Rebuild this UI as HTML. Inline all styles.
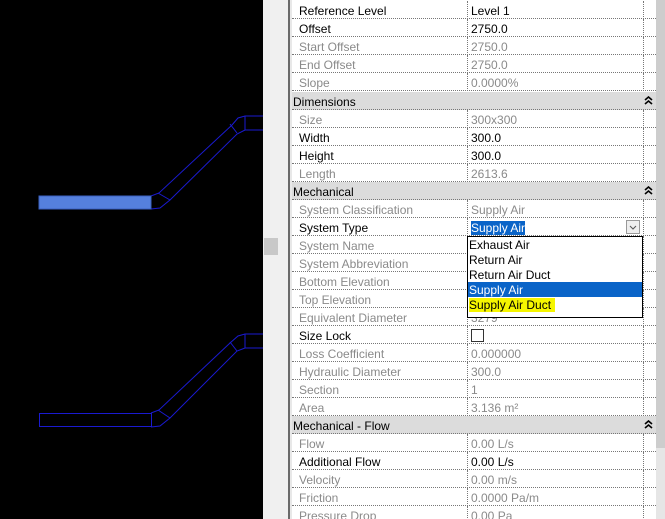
<!DOCTYPE html>
<html><head><style>
*{margin:0;padding:0;box-sizing:border-box}
html,body{width:665px;height:519px;overflow:hidden}
body{background:#000;position:relative;font-family:"Liberation Sans",sans-serif;font-size:12px}
#strip{position:absolute;left:263px;top:0;width:25px;height:519px;background:#f0f0f0}
#grip{position:absolute;left:264px;top:238px;width:14px;height:17px;background:#c8c8c8}
#bl{position:absolute;left:288px;top:0;width:2px;height:519px;background:#6a6a6a}
#bl2{position:absolute;left:290px;top:0;width:2px;height:519px;background:#e8e8e8}
#panel{position:absolute;left:292px;top:0;width:364px;height:519px;background:#fff}
#sb{position:absolute;left:656px;top:0;width:9px;height:519px;background:#e6e6e6}
#thumb{position:absolute;left:656px;top:0;width:9px;height:448px;background:#cdcdcd}
.r{position:absolute;left:292px;width:364px;height:18px;border-bottom:1px dotted #777}
.r .l{position:absolute;left:7px;top:3px;color:#000}
.r .v{position:absolute;left:175px;top:0;height:18px;padding:3px 0 0 3px;border-left:1px dotted #777;width:177px}
.r .c{position:absolute;left:351px;top:0;height:18px;border-left:1px dotted #777;width:12px}
.g .l,.g .v{color:#8a8a8a}
.h{background:#dcdcdc}
.h .l{left:1px}
.h svg{position:absolute;left:352px;top:4px}
#dd{position:absolute;left:467px;top:236px;width:176px;height:82px;background:#fff;border:1px solid #000}
#dd div{height:15px;line-height:16px;padding-left:1px}
</style></head><body>
<svg width="263" height="519" style="position:absolute;left:0;top:0">
<g fill="none" stroke="#1a1ad0" stroke-width="1">
<path d="M151 196 L159 193 L232 125 L238 118 L245 116 L263 116"/>
<path d="M151 209 L160 208 L170 200 L237 134 L245 130 L263 130"/>
<path d="M158 193 L170 200 M230 124 L237 133 M245 116 L245 130"/>
<rect x="39.5" y="413.5" width="112" height="13"/>
<path d="M151 413 L159 410 L230 343 L238 336 L245 334 L263 334"/>
<path d="M151 427 L160 426 L170 418 L237 351 L245 348 L263 348"/>
<path d="M158 410 L170 418 M230 342 L237 351 M245 334 L245 348"/>
</g>
<rect x="39" y="196" width="112" height="13" fill="#5580dd" stroke="#3a60c0"/>
</svg>
<div id="strip"></div><div id="grip"></div><div id="bl"></div><div id="bl2"></div>
<div id="panel"></div><div id="sb"></div><div id="thumb"></div>

<div class="r" style="top:1px"><span class="l">Reference Level</span><span class="v">Level 1</span><span class="c"></span></div>
<div class="r" style="top:19px"><span class="l">Offset</span><span class="v">2750.0</span><span class="c"></span></div>
<div class="r g" style="top:37px"><span class="l">Start Offset</span><span class="v">2750.0</span><span class="c"></span></div>
<div class="r g" style="top:55px"><span class="l">End Offset</span><span class="v">2750.0</span><span class="c"></span></div>
<div class="r g" style="top:73px"><span class="l">Slope</span><span class="v">0.0000%</span><span class="c"></span></div>
<div class="r h" style="top:92px"><span class="l">Dimensions</span><svg width="9" height="10"><path d="M1 4 L4.5 1 L8 4 M1 8 L4.5 5 L8 8" fill="none" stroke="#000" stroke-width="1.6"/></svg></div>
<div class="r g" style="top:110px"><span class="l">Size</span><span class="v">300x300</span><span class="c"></span></div>
<div class="r" style="top:128px"><span class="l">Width</span><span class="v">300.0</span><span class="c"></span></div>
<div class="r" style="top:146px"><span class="l">Height</span><span class="v">300.0</span><span class="c"></span></div>
<div class="r g" style="top:164px"><span class="l">Length</span><span class="v">2613.6</span><span class="c"></span></div>
<div class="r h" style="top:182px"><span class="l">Mechanical</span><svg width="9" height="10"><path d="M1 4 L4.5 1 L8 4 M1 8 L4.5 5 L8 8" fill="none" stroke="#000" stroke-width="1.6"/></svg></div>
<div class="r g" style="top:200px"><span class="l">System Classification</span><span class="v">Supply Air</span><span class="c"></span></div>
<div class="r" style="top:218px"><span class="l">System Type</span><span class="v"><span style="background:#0a64c8;color:#fff">Supply Air</span><span style="position:absolute;left:158px;top:2px;width:14px;height:14px;border:1px solid #999;background:#eee"><svg width="12" height="12" style="position:absolute;left:0;top:0"><path d="M3 5 L6 8 L9 5" fill="none" stroke="#555"/></svg></span></span><span class="c"></span></div>
<div class="r g" style="top:236px"><span class="l">System Name</span><span class="v"></span><span class="c"></span></div>
<div class="r g" style="top:254px"><span class="l">System Abbreviation</span><span class="v"></span><span class="c"></span></div>
<div class="r g" style="top:272px"><span class="l">Bottom Elevation</span><span class="v"></span><span class="c"></span></div>
<div class="r g" style="top:290px"><span class="l">Top Elevation</span><span class="v"></span><span class="c"></span></div>
<div class="r g" style="top:308px"><span class="l">Equivalent Diameter</span><span class="v">3279</span><span class="c"></span></div>
<div class="r" style="top:326px"><span class="l">Size Lock</span><span class="v"><span style="display:inline-block;width:13px;height:13px;border:1px solid #333;margin-top:0"></span></span><span class="c"></span></div>
<div class="r g" style="top:344px"><span class="l">Loss Coefficient</span><span class="v">0.000000</span><span class="c"></span></div>
<div class="r g" style="top:362px"><span class="l">Hydraulic Diameter</span><span class="v">300.0</span><span class="c"></span></div>
<div class="r g" style="top:380px"><span class="l">Section</span><span class="v">1</span><span class="c"></span></div>
<div class="r g" style="top:398px"><span class="l">Area</span><span class="v">3.136 m²</span><span class="c"></span></div>
<div class="r h" style="top:416px"><span class="l">Mechanical - Flow</span><svg width="9" height="10"><path d="M1 4 L4.5 1 L8 4 M1 8 L4.5 5 L8 8" fill="none" stroke="#000" stroke-width="1.6"/></svg></div>
<div class="r g" style="top:434px"><span class="l">Flow</span><span class="v">0.00 L/s</span><span class="c"></span></div>
<div class="r" style="top:452px"><span class="l">Additional Flow</span><span class="v">0.00 L/s</span><span class="c"></span></div>
<div class="r g" style="top:470px"><span class="l">Velocity</span><span class="v">0.00 m/s</span><span class="c"></span></div>
<div class="r g" style="top:488px"><span class="l">Friction</span><span class="v">0.0000 Pa/m</span><span class="c"></span></div>
<div class="r g" style="top:506px"><span class="l">Pressure Drop</span><span class="v">0.00 Pa</span><span class="c"></span></div>

<div id="dd">
<div>Exhaust Air</div>
<div>Return Air</div>
<div>Return Air Duct</div>
<div style="background:#0a64c8;color:#fff">Supply Air</div>
<div><span style="background:#f5f500;padding:0 4px 0 0">Supply Air Duct</span></div>
</div>
</body></html>
